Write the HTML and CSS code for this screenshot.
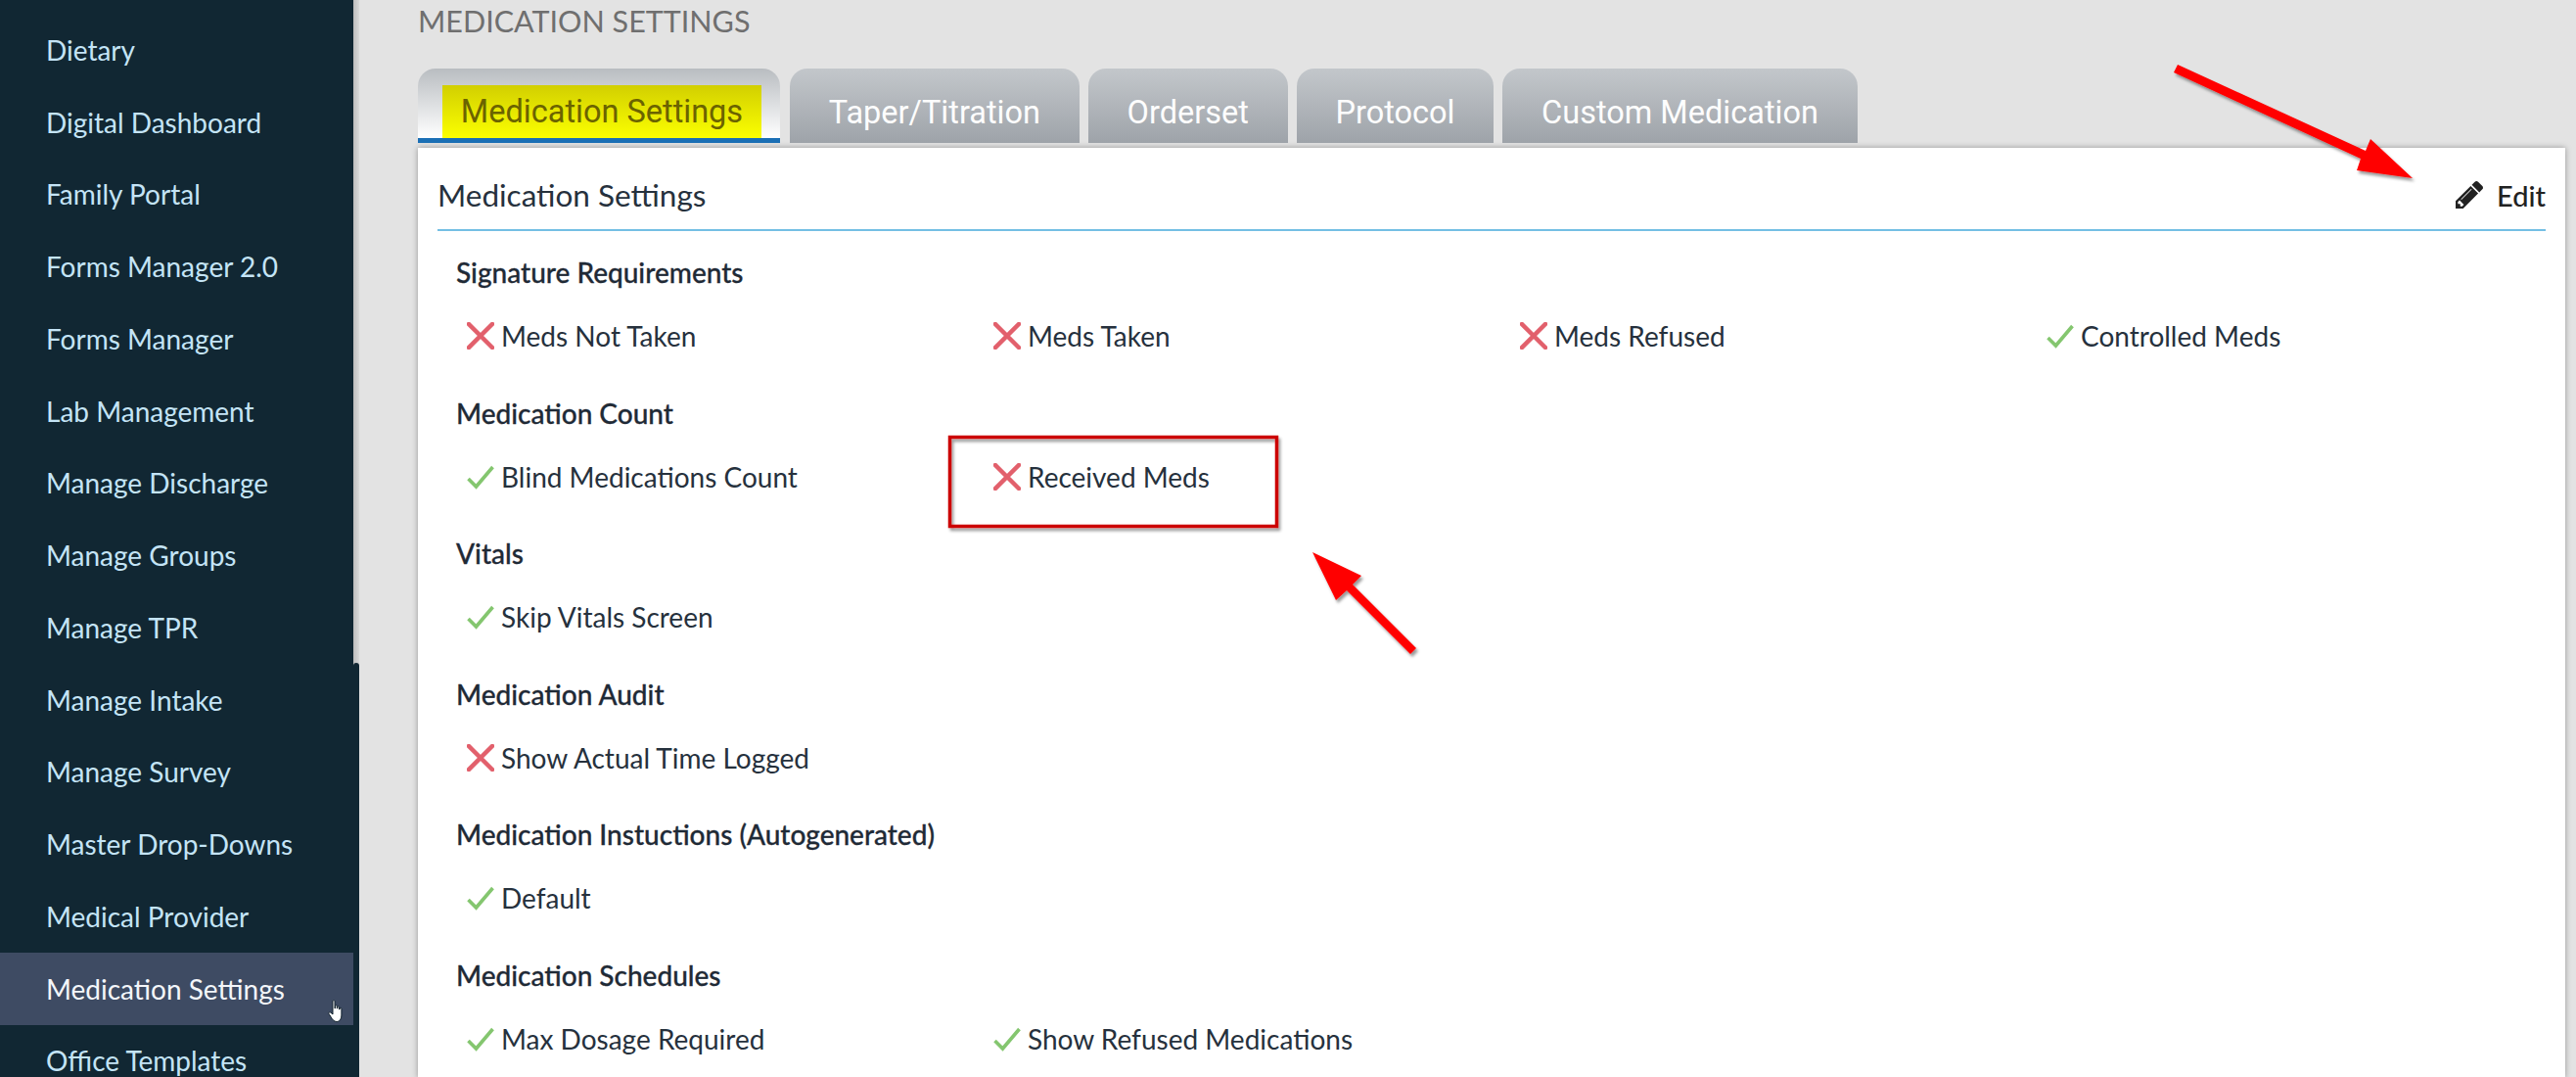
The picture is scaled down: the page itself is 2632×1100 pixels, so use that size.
FILE: index.html
```html
<!DOCTYPE html>
<html lang="en">
<head>
<meta charset="utf-8">
<title>Medication Settings</title>
<link rel="stylesheet" href="styles.css">
</head>
<body>
<div class="app">
  <aside class="sidebar">
    <nav class="nav">
      <a class="nav-item">Dietary</a>
      <a class="nav-item">Digital Dashboard</a>
      <a class="nav-item">Family Portal</a>
      <a class="nav-item">Forms Manager 2.0</a>
      <a class="nav-item">Forms Manager</a>
      <a class="nav-item">Lab Management</a>
      <a class="nav-item">Manage Discharge</a>
      <a class="nav-item">Manage Groups</a>
      <a class="nav-item">Manage TPR</a>
      <a class="nav-item">Manage Intake</a>
      <a class="nav-item">Manage Survey</a>
      <a class="nav-item">Master Drop-Downs</a>
      <a class="nav-item">Medical Provider</a>
      <a class="nav-item nav-item-active">Medication Settings
        <svg class="cursor" viewBox="0 0 17 23" width="17" height="23"><path d="M5 1.500c0-1 2-1 2 0V9l.6-.3V6.500c0-.9 1.800-.9 1.800 0V9l.5-.2V7.500c0-.9 1.700-.9 1.700 0V10l.5-.1V9c0-.9 1.800-.8 1.800.2V16c0 3-1.500 6-4 6.500H9C6 22.500 4.500 20 3 17.500L1 14.500c-.7-1.200.8-2.300 1.900-1.300L5 15z" fill="#fff" stroke="#10202c" stroke-width="1"/></svg>
      </a>
      <a class="nav-item">Office Templates</a>
    </nav>
    <div class="scrollbar"><div class="scrollbar-thumb"></div></div>
  </aside>

  <main class="main">
    <h1 class="page-title">MEDICATION SETTINGS</h1>
    <div class="tabs">
      <div class="tab tab-active"><span class="tab-mark">Medication Settings</span></div>
      <div class="tab">Taper/Titration</div>
      <div class="tab">Orderset</div>
      <div class="tab">Protocol</div>
      <div class="tab">Custom Medication</div>
    </div>

    <section class="card">
      <header class="card-head">
        <h2 class="card-title">Medication Settings</h2>
        <a class="edit">
          <svg class="pencil" viewBox="128 149 1515 1515" width="28" height="28"><path d="M491 1536l91-91-235-235-91 91v107h128v128h107zm523-928q0-22-22-22-10 0-17 7l-542 542q-7 7-7 17 0 22 22 22 10 0 17-7l542-542q7-7 7-17zm-54-192l416 416-832 832h-416v-416zm683 96q0 53-37 90l-166 166-416-416 166-165q36-38 90-38 53 0 91 38l235 234q37 39 37 91z" fill="#222"/></svg>
          Edit
        </a>
      </header>

      <div class="groups">
        <div class="group">
          <h3 class="group-title">Signature Requirements</h3>
          <div class="items">
            <div class="item"><svg class="ico"><use href="#x"/></svg>Meds Not Taken</div>
            <div class="item"><svg class="ico"><use href="#x"/></svg>Meds Taken</div>
            <div class="item"><svg class="ico"><use href="#x"/></svg>Meds Refused</div>
            <div class="item"><svg class="ico"><use href="#c"/></svg>Controlled Meds</div>
          </div>
        </div>
        <div class="group">
          <h3 class="group-title">Medication Count</h3>
          <div class="items">
            <div class="item"><svg class="ico"><use href="#c"/></svg>Blind Medications Count</div>
            <div class="item"><svg class="ico"><use href="#x"/></svg>Received Meds</div>
          </div>
        </div>
        <div class="group">
          <h3 class="group-title">Vitals</h3>
          <div class="items">
            <div class="item"><svg class="ico"><use href="#c"/></svg>Skip Vitals Screen</div>
          </div>
        </div>
        <div class="group">
          <h3 class="group-title">Medication Audit</h3>
          <div class="items">
            <div class="item"><svg class="ico"><use href="#x"/></svg>Show Actual Time Logged</div>
          </div>
        </div>
        <div class="group">
          <h3 class="group-title">Medication Instuctions (Autogenerated)</h3>
          <div class="items">
            <div class="item"><svg class="ico"><use href="#c"/></svg>Default</div>
          </div>
        </div>
        <div class="group">
          <h3 class="group-title">Medication Schedules</h3>
          <div class="items">
            <div class="item"><svg class="ico"><use href="#c"/></svg>Max Dosage Required</div>
            <div class="item"><svg class="ico"><use href="#c"/></svg>Show Refused Medications</div>
          </div>
        </div>
      </div>
    </section>
  </main>
</div>

<svg class="defs" width="0" height="0">
  <symbol id="x" viewBox="0 0 28 28"><path d="M2 2L26 26M26 2L2 26" fill="none" stroke="#e2606c" stroke-width="4.500" stroke-linecap="square"/></symbol>
  <symbol id="c" viewBox="0 0 28 28"><path d="M1.500 16L9.500 24L26.500 4" fill="none" stroke="#84c66f" stroke-width="3.600"/></symbol>
</svg>

<svg class="annotations" width="2632" height="1100" viewBox="0 0 2632 1100">
  <defs>
    <filter id="soft" x="-10%" y="-10%" width="125%" height="125%"><feDropShadow dx="2" dy="3" stdDeviation="1.500" flood-color="#000" flood-opacity=".4"/></filter>
  </defs>
  <rect class="note-box" x="970.500" y="446.500" width="334" height="91"/>
  <path class="note-arrow" d="M2225 66L2417 154L2422 142L2465 182L2408 174L2412 162L2221 74Z"/>
  <path class="note-arrow" d="M1341 564L1391 588L1382 597L1447 662L1441 668L1376 603L1365 613Z"/>
</svg>
</body>
</html>
```

FILE: styles.css
```css
* { box-sizing: border-box; }

html, body {
  margin: 0;
  height: 100%;
  overflow: hidden;
}

body {
  background: #e3e3e3;
  font-family: Lato, "Open Sans", sans-serif;
  color: #1f2a36;
}

.app {
  display: flex;
  height: 1100px;
  overflow: hidden;
}

.sidebar {
  flex: 0 0 367px;
  display: flex;
  height: 1100px;
}

.nav {
  width: 361px;
  padding-top: 14px;
  background: #112733;
  overflow: hidden;
}

.nav-item {
  position: relative;
  display: flex;
  align-items: center;
  height: 73.75px;
  padding-left: 47px;
  font-size: 28px;
  color: #c4e4f6;
}

.nav-item-active {
  background: #3e4b63;
  color: #f3f6fa;
}

.cursor {
  position: absolute;
  left: 335px;
  top: 48px;
}

.scrollbar {
  width: 6px;
  background: linear-gradient(90deg, #bdbdbd, #d9d9d9);
}

.scrollbar-thumb {
  height: 423px;
  margin-top: 677px;
  background: #112733;
  border-radius: 5px 5px 0 0;
}

.main {
  flex: 1;
  min-width: 0;
  padding: 0 11px 0 60px;
}

.page-title {
  margin: 0;
  height: 44px;
  font-size: 30.500px;
  font-weight: 400;
  line-height: 42px;
  color: #6f6f6f;
}

.tabs {
  display: flex;
  gap: 9px;
  margin-top: 26px;
  padding-left: 1px;
  font-family: Roboto, sans-serif;
}

.tab {
  display: flex;
  align-items: center;
  justify-content: center;
  height: 76px;
  padding: 14px 39.800px 0;
  border-radius: 18px 18px 0 0;
  font-size: 32.500px;
  color: #fdfdfd;
  background: linear-gradient(180deg, #c3c7cb, #9ea3a9);
}

.tab-active {
  padding: 16px 19px 0 25px;
  border-bottom: 5px solid #1a6fb5;
  background: linear-gradient(180deg, #b9bdc1, #fff);
  margin-left: -1px;
  margin-right: 1px;
}

.tab-mark {
  display: flex;
  align-items: center;
  justify-content: center;
  height: 54px;
  width: 326px;
  color: #6b6300;
  background: linear-gradient(180deg, #d2cf00, #fbff00);
}

.card {
  height: 950px;
  margin-top: 5px;
  padding: 0 20px;
  background: #fff;
  box-shadow: 0 0 6px rgba(0, 0, 0, .35);
}

.card-head {
  display: flex;
  align-items: center;
  justify-content: space-between;
  height: 85px;
  padding: 28px 0 15px;
  border-bottom: 2px solid #74bfe4;
}

.card-title {
  margin: 0;
  font-size: 31.500px;
  font-weight: 400;
  color: #26313d;
}

.edit {
  display: flex;
  align-items: center;
  gap: 14px;
  font-size: 29px;
  font-weight: 500;
  color: #222;
}

.groups {
  padding: 22px 0 0 19px;
}

.group {
  height: 143.600px;
}

.group-title {
  margin: 0;
  font-size: 28px;
  font-weight: 500;
  line-height: 40px;
  color: #1f2a36;
  -webkit-text-stroke: .3px #1f2a36;
}

.items {
  display: grid;
  grid-template-columns: repeat(4, 538px);
  margin-top: 25px;
}

.item {
  display: flex;
  align-items: center;
  height: 40px;
  padding-left: 11px;
  font-size: 28px;
  color: #26313d;
}

.ico {
  flex: 0 0 28px;
  width: 28px;
  height: 28px;
  margin-right: 7px;
  filter: blur(.4px);
}

.defs {
  position: absolute;
}

.annotations {
  position: absolute;
  left: 0;
  top: 0;
  pointer-events: none;
}

.note-box {
  fill: none;
  stroke: #cc0000;
  stroke-width: 3.500;
  filter: url(#soft);
}

.note-arrow {
  fill: #ff0000;
  filter: url(#soft);
}
```
